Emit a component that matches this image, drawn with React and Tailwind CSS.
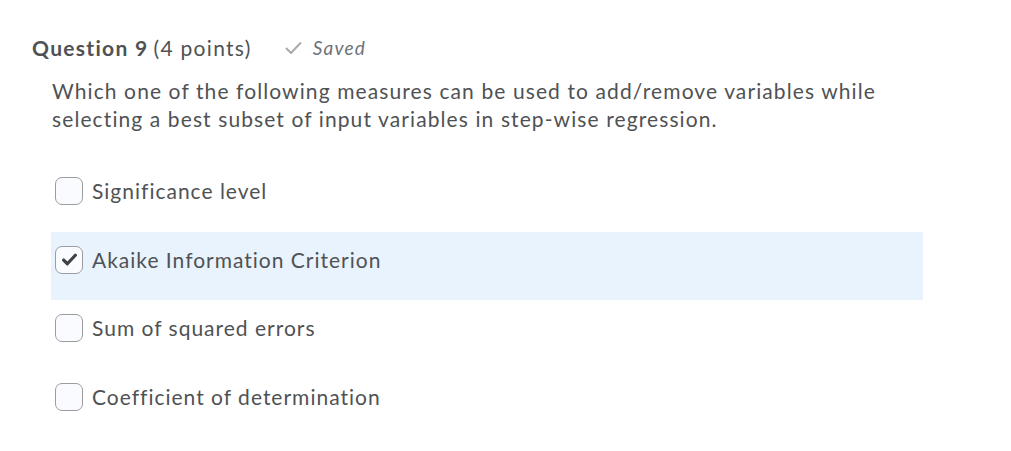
import { useState } from "react";

const options = [
  "Significance level",
  "Akaike Information Criterion",
  "Sum of squared errors",
  "Coefficient of determination",
];

function Box({ checked }) {
  return (
    <span className="flex h-[28px] w-[28px] shrink-0 items-center justify-center rounded-[7px] border-[1.5px] border-[#9a9c9e] bg-[#f9fbff]">
      {checked && (
        <svg width="17" height="17" viewBox="0 0 16 16">
          <path
            d="M2.5 8.5l3.5 3.5 7.5-8"
            fill="none"
            stroke="#3f4244"
            strokeWidth="3"
            strokeLinecap="round"
            strokeLinejoin="round"
          />
        </svg>
      )}
    </span>
  );
}

export default function App() {
  const [selected, setSelected] = useState([1]);

  const toggle = (i) =>
    setSelected((s) => (s.includes(i) ? s.filter((x) => x !== i) : [...s, i]));

  return (
    <div className="min-h-[451px] w-[1011px] bg-white pl-[32px] pt-[34px] text-[#4f5254] font-['Lato','Liberation_Sans',sans-serif]">
      {/* Header */}
      <div className="flex items-center text-[21px] leading-[28px] tracking-[1.3px]">
        <span className="font-bold">Question 9</span>
        <span className="ml-[5px]">(4 points)</span>
        <span className="ml-[33px] flex items-center gap-[11px] text-[#6e7376]">
          <svg width="17" height="14" viewBox="0 0 17 14">
            <path
              d="M1.5 7.5l4.5 4.5 9.5-10"
              fill="none"
              stroke="#a8abad"
              strokeWidth="2"
              strokeLinecap="round"
              strokeLinejoin="round"
            />
          </svg>
          <span className="text-[19px] italic tracking-[1.2px]">Saved</span>
        </span>
      </div>

      {/* Question text */}
      <p className="ml-[20px] mt-[15px] w-[850px] text-[21px] leading-[28px] tracking-[1.1px]">
        Which one of the following measures can be used to add/remove variables while
        selecting a best subset of input variables in step-wise regression.
      </p>

      {/* Options */}
      <div className="ml-[19px] mt-[30px] w-[872px]">
        {options.map((opt, i) => {
          const on = selected.includes(i);
          return (
            <label
              key={opt}
              onClick={() => toggle(i)}
              className={`flex h-[68.5px] cursor-pointer items-start gap-[9px] pl-[4px] pt-[14px] ${
                on ? "bg-[#e8f3fd]" : ""
              }`}
            >
              <Box checked={on} />
              <span className="text-[21px] leading-[28px] tracking-[1px]">{opt}</span>
            </label>
          );
        })}
      </div>
    </div>
  );
}
